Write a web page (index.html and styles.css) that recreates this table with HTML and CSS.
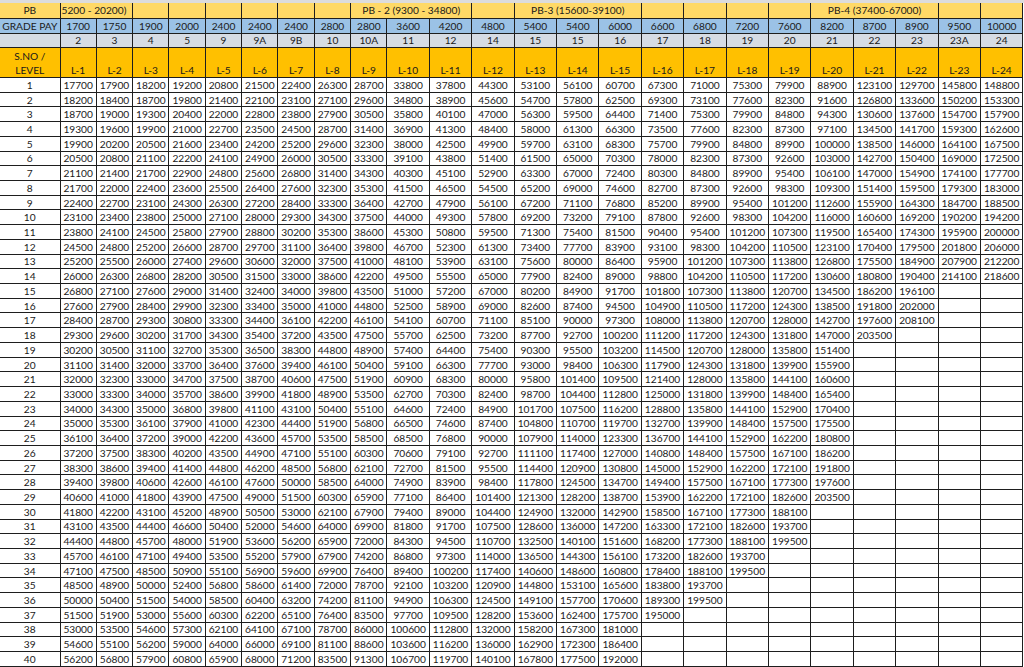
FILE: index.html
```html
<!DOCTYPE html>
<html lang="en">
<head>
<meta charset="utf-8">
<title>Pay Matrix</title>
<link rel="stylesheet" href="styles.css">
</head>
<body>
<div class="sheet">
<table class="pm">
<colgroup>
<col class="c0">
<col class="ca"><col class="ca"><col class="ca"><col class="ca"><col class="ca"><col class="ca"><col class="ca"><col class="ca"><col class="ca">
<col class="cb"><col class="cb"><col class="cb"><col class="cb"><col class="cb"><col class="cb"><col class="cb"><col class="cb"><col class="cb"><col class="cb"><col class="cb"><col class="cb"><col class="cb"><col class="cb"><col class="cb">
</colgroup>
<thead>
<tr class="pb"><td>PB</td><td colspan="2" class="left">5200 - 20200)</td><td></td><td></td><td></td><td></td><td></td><td></td><td colspan="3">PB - 2 (9300 - 34800)</td><td></td><td colspan="3">PB-3 (15600-39100)</td><td></td><td></td><td></td><td></td><td colspan="3">PB-4 (37400-67000)</td><td></td><td></td></tr>
<tr class="gp"><td>GRADE PAY</td><td>1700</td><td>1750</td><td>1900</td><td>2000</td><td>2400</td><td>2400</td><td>2400</td><td>2800</td><td>2800</td><td>3600</td><td>4200</td><td>4800</td><td>5400</td><td>5400</td><td>6000</td><td>6600</td><td>6800</td><td>7200</td><td>7600</td><td>8200</td><td>8700</td><td>8900</td><td>9500</td><td>10000</td></tr>
<tr class="gr"><td></td><td>2</td><td>3</td><td>4</td><td>5</td><td>9</td><td>9A</td><td>9B</td><td>10</td><td>10A</td><td>11</td><td>12</td><td>14</td><td>15</td><td>15</td><td>16</td><td>17</td><td>18</td><td>19</td><td>20</td><td>21</td><td>22</td><td>23</td><td>23A</td><td>24</td></tr>
<tr class="lv"><td>S.NO /<br>LEVEL</td><td>L-1</td><td>L-2</td><td>L-3</td><td>L-4</td><td>L-5</td><td>L-6</td><td>L-7</td><td>L-8</td><td>L-9</td><td>L-10</td><td>L-11</td><td>L-12</td><td>L-13</td><td>L-14</td><td>L-15</td><td>L-16</td><td>L-17</td><td>L-18</td><td>L-19</td><td>L-20</td><td>L-21</td><td>L-22</td><td>L-23</td><td>L-24</td></tr>
</thead>
<tbody>
<tr><td>1</td><td>17700</td><td>17900</td><td>18200</td><td>19200</td><td>20800</td><td>21500</td><td>22400</td><td>26300</td><td>28700</td><td>33800</td><td>37800</td><td>44300</td><td>53100</td><td>56100</td><td>60700</td><td>67300</td><td>71000</td><td>75300</td><td>79900</td><td>88900</td><td>123100</td><td>129700</td><td>145800</td><td>148800</td></tr>
<tr><td>2</td><td>18200</td><td>18400</td><td>18700</td><td>19800</td><td>21400</td><td>22100</td><td>23100</td><td>27100</td><td>29600</td><td>34800</td><td>38900</td><td>45600</td><td>54700</td><td>57800</td><td>62500</td><td>69300</td><td>73100</td><td>77600</td><td>82300</td><td>91600</td><td>126800</td><td>133600</td><td>150200</td><td>153300</td></tr>
<tr><td>3</td><td>18700</td><td>19000</td><td>19300</td><td>20400</td><td>22000</td><td>22800</td><td>23800</td><td>27900</td><td>30500</td><td>35800</td><td>40100</td><td>47000</td><td>56300</td><td>59500</td><td>64400</td><td>71400</td><td>75300</td><td>79900</td><td>84800</td><td>94300</td><td>130600</td><td>137600</td><td>154700</td><td>157900</td></tr>
<tr><td>4</td><td>19300</td><td>19600</td><td>19900</td><td>21000</td><td>22700</td><td>23500</td><td>24500</td><td>28700</td><td>31400</td><td>36900</td><td>41300</td><td>48400</td><td>58000</td><td>61300</td><td>66300</td><td>73500</td><td>77600</td><td>82300</td><td>87300</td><td>97100</td><td>134500</td><td>141700</td><td>159300</td><td>162600</td></tr>
<tr><td>5</td><td>19900</td><td>20200</td><td>20500</td><td>21600</td><td>23400</td><td>24200</td><td>25200</td><td>29600</td><td>32300</td><td>38000</td><td>42500</td><td>49900</td><td>59700</td><td>63100</td><td>68300</td><td>75700</td><td>79900</td><td>84800</td><td>89900</td><td>100000</td><td>138500</td><td>146000</td><td>164100</td><td>167500</td></tr>
<tr><td>6</td><td>20500</td><td>20800</td><td>21100</td><td>22200</td><td>24100</td><td>24900</td><td>26000</td><td>30500</td><td>33300</td><td>39100</td><td>43800</td><td>51400</td><td>61500</td><td>65000</td><td>70300</td><td>78000</td><td>82300</td><td>87300</td><td>92600</td><td>103000</td><td>142700</td><td>150400</td><td>169000</td><td>172500</td></tr>
<tr><td>7</td><td>21100</td><td>21400</td><td>21700</td><td>22900</td><td>24800</td><td>25600</td><td>26800</td><td>31400</td><td>34300</td><td>40300</td><td>45100</td><td>52900</td><td>63300</td><td>67000</td><td>72400</td><td>80300</td><td>84800</td><td>89900</td><td>95400</td><td>106100</td><td>147000</td><td>154900</td><td>174100</td><td>177700</td></tr>
<tr><td>8</td><td>21700</td><td>22000</td><td>22400</td><td>23600</td><td>25500</td><td>26400</td><td>27600</td><td>32300</td><td>35300</td><td>41500</td><td>46500</td><td>54500</td><td>65200</td><td>69000</td><td>74600</td><td>82700</td><td>87300</td><td>92600</td><td>98300</td><td>109300</td><td>151400</td><td>159500</td><td>179300</td><td>183000</td></tr>
<tr><td>9</td><td>22400</td><td>22700</td><td>23100</td><td>24300</td><td>26300</td><td>27200</td><td>28400</td><td>33300</td><td>36400</td><td>42700</td><td>47900</td><td>56100</td><td>67200</td><td>71100</td><td>76800</td><td>85200</td><td>89900</td><td>95400</td><td>101200</td><td>112600</td><td>155900</td><td>164300</td><td>184700</td><td>188500</td></tr>
<tr><td>10</td><td>23100</td><td>23400</td><td>23800</td><td>25000</td><td>27100</td><td>28000</td><td>29300</td><td>34300</td><td>37500</td><td>44000</td><td>49300</td><td>57800</td><td>69200</td><td>73200</td><td>79100</td><td>87800</td><td>92600</td><td>98300</td><td>104200</td><td>116000</td><td>160600</td><td>169200</td><td>190200</td><td>194200</td></tr>
<tr><td>11</td><td>23800</td><td>24100</td><td>24500</td><td>25800</td><td>27900</td><td>28800</td><td>30200</td><td>35300</td><td>38600</td><td>45300</td><td>50800</td><td>59500</td><td>71300</td><td>75400</td><td>81500</td><td>90400</td><td>95400</td><td>101200</td><td>107300</td><td>119500</td><td>165400</td><td>174300</td><td>195900</td><td>200000</td></tr>
<tr><td>12</td><td>24500</td><td>24800</td><td>25200</td><td>26600</td><td>28700</td><td>29700</td><td>31100</td><td>36400</td><td>39800</td><td>46700</td><td>52300</td><td>61300</td><td>73400</td><td>77700</td><td>83900</td><td>93100</td><td>98300</td><td>104200</td><td>110500</td><td>123100</td><td>170400</td><td>179500</td><td>201800</td><td>206000</td></tr>
<tr><td>13</td><td>25200</td><td>25500</td><td>26000</td><td>27400</td><td>29600</td><td>30600</td><td>32000</td><td>37500</td><td>41000</td><td>48100</td><td>53900</td><td>63100</td><td>75600</td><td>80000</td><td>86400</td><td>95900</td><td>101200</td><td>107300</td><td>113800</td><td>126800</td><td>175500</td><td>184900</td><td>207900</td><td>212200</td></tr>
<tr><td>14</td><td>26000</td><td>26300</td><td>26800</td><td>28200</td><td>30500</td><td>31500</td><td>33000</td><td>38600</td><td>42200</td><td>49500</td><td>55500</td><td>65000</td><td>77900</td><td>82400</td><td>89000</td><td>98800</td><td>104200</td><td>110500</td><td>117200</td><td>130600</td><td>180800</td><td>190400</td><td>214100</td><td>218600</td></tr>
<tr><td>15</td><td>26800</td><td>27100</td><td>27600</td><td>29000</td><td>31400</td><td>32400</td><td>34000</td><td>39800</td><td>43500</td><td>51000</td><td>57200</td><td>67000</td><td>80200</td><td>84900</td><td>91700</td><td>101800</td><td>107300</td><td>113800</td><td>120700</td><td>134500</td><td>186200</td><td>196100</td><td></td><td></td></tr>
<tr><td>16</td><td>27600</td><td>27900</td><td>28400</td><td>29900</td><td>32300</td><td>33400</td><td>35000</td><td>41000</td><td>44800</td><td>52500</td><td>58900</td><td>69000</td><td>82600</td><td>87400</td><td>94500</td><td>104900</td><td>110500</td><td>117200</td><td>124300</td><td>138500</td><td>191800</td><td>202000</td><td></td><td></td></tr>
<tr><td>17</td><td>28400</td><td>28700</td><td>29300</td><td>30800</td><td>33300</td><td>34400</td><td>36100</td><td>42200</td><td>46100</td><td>54100</td><td>60700</td><td>71100</td><td>85100</td><td>90000</td><td>97300</td><td>108000</td><td>113800</td><td>120700</td><td>128000</td><td>142700</td><td>197600</td><td>208100</td><td></td><td></td></tr>
<tr><td>18</td><td>29300</td><td>29600</td><td>30200</td><td>31700</td><td>34300</td><td>35400</td><td>37200</td><td>43500</td><td>47500</td><td>55700</td><td>62500</td><td>73200</td><td>87700</td><td>92700</td><td>100200</td><td>111200</td><td>117200</td><td>124300</td><td>131800</td><td>147000</td><td>203500</td><td></td><td></td><td></td></tr>
<tr><td>19</td><td>30200</td><td>30500</td><td>31100</td><td>32700</td><td>35300</td><td>36500</td><td>38300</td><td>44800</td><td>48900</td><td>57400</td><td>64400</td><td>75400</td><td>90300</td><td>95500</td><td>103200</td><td>114500</td><td>120700</td><td>128000</td><td>135800</td><td>151400</td><td></td><td></td><td></td><td></td></tr>
<tr><td>20</td><td>31100</td><td>31400</td><td>32000</td><td>33700</td><td>36400</td><td>37600</td><td>39400</td><td>46100</td><td>50400</td><td>59100</td><td>66300</td><td>77700</td><td>93000</td><td>98400</td><td>106300</td><td>117900</td><td>124300</td><td>131800</td><td>139900</td><td>155900</td><td></td><td></td><td></td><td></td></tr>
<tr><td>21</td><td>32000</td><td>32300</td><td>33000</td><td>34700</td><td>37500</td><td>38700</td><td>40600</td><td>47500</td><td>51900</td><td>60900</td><td>68300</td><td>80000</td><td>95800</td><td>101400</td><td>109500</td><td>121400</td><td>128000</td><td>135800</td><td>144100</td><td>160600</td><td></td><td></td><td></td><td></td></tr>
<tr><td>22</td><td>33000</td><td>33300</td><td>34000</td><td>35700</td><td>38600</td><td>39900</td><td>41800</td><td>48900</td><td>53500</td><td>62700</td><td>70300</td><td>82400</td><td>98700</td><td>104400</td><td>112800</td><td>125000</td><td>131800</td><td>139900</td><td>148400</td><td>165400</td><td></td><td></td><td></td><td></td></tr>
<tr><td>23</td><td>34000</td><td>34300</td><td>35000</td><td>36800</td><td>39800</td><td>41100</td><td>43100</td><td>50400</td><td>55100</td><td>64600</td><td>72400</td><td>84900</td><td>101700</td><td>107500</td><td>116200</td><td>128800</td><td>135800</td><td>144100</td><td>152900</td><td>170400</td><td></td><td></td><td></td><td></td></tr>
<tr><td>24</td><td>35000</td><td>35300</td><td>36100</td><td>37900</td><td>41000</td><td>42300</td><td>44400</td><td>51900</td><td>56800</td><td>66500</td><td>74600</td><td>87400</td><td>104800</td><td>110700</td><td>119700</td><td>132700</td><td>139900</td><td>148400</td><td>157500</td><td>175500</td><td></td><td></td><td></td><td></td></tr>
<tr><td>25</td><td>36100</td><td>36400</td><td>37200</td><td>39000</td><td>42200</td><td>43600</td><td>45700</td><td>53500</td><td>58500</td><td>68500</td><td>76800</td><td>90000</td><td>107900</td><td>114000</td><td>123300</td><td>136700</td><td>144100</td><td>152900</td><td>162200</td><td>180800</td><td></td><td></td><td></td><td></td></tr>
<tr><td>26</td><td>37200</td><td>37500</td><td>38300</td><td>40200</td><td>43500</td><td>44900</td><td>47100</td><td>55100</td><td>60300</td><td>70600</td><td>79100</td><td>92700</td><td>111100</td><td>117400</td><td>127000</td><td>140800</td><td>148400</td><td>157500</td><td>167100</td><td>186200</td><td></td><td></td><td></td><td></td></tr>
<tr><td>27</td><td>38300</td><td>38600</td><td>39400</td><td>41400</td><td>44800</td><td>46200</td><td>48500</td><td>56800</td><td>62100</td><td>72700</td><td>81500</td><td>95500</td><td>114400</td><td>120900</td><td>130800</td><td>145000</td><td>152900</td><td>162200</td><td>172100</td><td>191800</td><td></td><td></td><td></td><td></td></tr>
<tr><td>28</td><td>39400</td><td>39800</td><td>40600</td><td>42600</td><td>46100</td><td>47600</td><td>50000</td><td>58500</td><td>64000</td><td>74900</td><td>83900</td><td>98400</td><td>117800</td><td>124500</td><td>134700</td><td>149400</td><td>157500</td><td>167100</td><td>177300</td><td>197600</td><td></td><td></td><td></td><td></td></tr>
<tr><td>29</td><td>40600</td><td>41000</td><td>41800</td><td>43900</td><td>47500</td><td>49000</td><td>51500</td><td>60300</td><td>65900</td><td>77100</td><td>86400</td><td>101400</td><td>121300</td><td>128200</td><td>138700</td><td>153900</td><td>162200</td><td>172100</td><td>182600</td><td>203500</td><td></td><td></td><td></td><td></td></tr>
<tr><td>30</td><td>41800</td><td>42200</td><td>43100</td><td>45200</td><td>48900</td><td>50500</td><td>53000</td><td>62100</td><td>67900</td><td>79400</td><td>89000</td><td>104400</td><td>124900</td><td>132000</td><td>142900</td><td>158500</td><td>167100</td><td>177300</td><td>188100</td><td></td><td></td><td></td><td></td><td></td></tr>
<tr><td>31</td><td>43100</td><td>43500</td><td>44400</td><td>46600</td><td>50400</td><td>52000</td><td>54600</td><td>64000</td><td>69900</td><td>81800</td><td>91700</td><td>107500</td><td>128600</td><td>136000</td><td>147200</td><td>163300</td><td>172100</td><td>182600</td><td>193700</td><td></td><td></td><td></td><td></td><td></td></tr>
<tr><td>32</td><td>44400</td><td>44800</td><td>45700</td><td>48000</td><td>51900</td><td>53600</td><td>56200</td><td>65900</td><td>72000</td><td>84300</td><td>94500</td><td>110700</td><td>132500</td><td>140100</td><td>151600</td><td>168200</td><td>177300</td><td>188100</td><td>199500</td><td></td><td></td><td></td><td></td><td></td></tr>
<tr><td>33</td><td>45700</td><td>46100</td><td>47100</td><td>49400</td><td>53500</td><td>55200</td><td>57900</td><td>67900</td><td>74200</td><td>86800</td><td>97300</td><td>114000</td><td>136500</td><td>144300</td><td>156100</td><td>173200</td><td>182600</td><td>193700</td><td></td><td></td><td></td><td></td><td></td><td></td></tr>
<tr><td>34</td><td>47100</td><td>47500</td><td>48500</td><td>50900</td><td>55100</td><td>56900</td><td>59600</td><td>69900</td><td>76400</td><td>89400</td><td>100200</td><td>117400</td><td>140600</td><td>148600</td><td>160800</td><td>178400</td><td>188100</td><td>199500</td><td></td><td></td><td></td><td></td><td></td><td></td></tr>
<tr><td>35</td><td>48500</td><td>48900</td><td>50000</td><td>52400</td><td>56800</td><td>58600</td><td>61400</td><td>72000</td><td>78700</td><td>92100</td><td>103200</td><td>120900</td><td>144800</td><td>153100</td><td>165600</td><td>183800</td><td>193700</td><td></td><td></td><td></td><td></td><td></td><td></td><td></td></tr>
<tr><td>36</td><td>50000</td><td>50400</td><td>51500</td><td>54000</td><td>58500</td><td>60400</td><td>63200</td><td>74200</td><td>81100</td><td>94900</td><td>106300</td><td>124500</td><td>149100</td><td>157700</td><td>170600</td><td>189300</td><td>199500</td><td></td><td></td><td></td><td></td><td></td><td></td><td></td></tr>
<tr><td>37</td><td>51500</td><td>51900</td><td>53000</td><td>55600</td><td>60300</td><td>62200</td><td>65100</td><td>76400</td><td>83500</td><td>97700</td><td>109500</td><td>128200</td><td>153600</td><td>162400</td><td>175700</td><td>195000</td><td></td><td></td><td></td><td></td><td></td><td></td><td></td><td></td></tr>
<tr><td>38</td><td>53000</td><td>53500</td><td>54600</td><td>57300</td><td>62100</td><td>64100</td><td>67100</td><td>78700</td><td>86000</td><td>100600</td><td>112800</td><td>132000</td><td>158200</td><td>167300</td><td>181000</td><td></td><td></td><td></td><td></td><td></td><td></td><td></td><td></td><td></td></tr>
<tr><td>39</td><td>54600</td><td>55100</td><td>56200</td><td>59000</td><td>64000</td><td>66000</td><td>69100</td><td>81100</td><td>88600</td><td>103600</td><td>116200</td><td>136000</td><td>162900</td><td>172300</td><td>186400</td><td></td><td></td><td></td><td></td><td></td><td></td><td></td><td></td><td></td></tr>
<tr><td>40</td><td>56200</td><td>56800</td><td>57900</td><td>60800</td><td>65900</td><td>68000</td><td>71200</td><td>83500</td><td>91300</td><td>106700</td><td>119700</td><td>140100</td><td>167800</td><td>177500</td><td>192000</td><td></td><td></td><td></td><td></td><td></td><td></td><td></td><td></td><td></td></tr>
</tbody>
</table>
</div>
</body>
</html>
```
FILE: styles.css
```css
html, body {
  margin: 0;
  padding: 0;
  background: #ffffff;
}

.sheet {
  border-top: 3px solid #dcdcdc;
  width: 1024px;
  overflow: hidden;
}

.pm {
  table-layout: fixed;
  width: 1023px;
  border-collapse: collapse;
  font-family: Lato, "Liberation Sans", Arial, sans-serif;
  font-size: 10.2px;
  color: #1a1a1a;
}

.pm .c0 { width: 60px; }
.pm .ca { width: 36.33px; }
.pm .cb { width: 42.4px; }

.pm td {
  border: 1px solid #1e1e1e;
  padding: 0;
  text-align: center;
  vertical-align: middle;
  line-height: 12px;
  white-space: nowrap;
  overflow: hidden;
  background: #ffffff;
}

.pm tr:first-child td { border-top: 0; }
.pm td:first-child { border-left: 0; }

.pm tbody tr { height: 14.72px; }

.pm .pb { height: 15.3px; }
.pm .pb td { background: #ffd966; }
.pm .pb td.left { text-align: left; padding-left: 1px; }

.pm .gp { height: 15px; }
.pm .gp td { background: #9bc2e6; }

.pm .gr { height: 14.4px; }
.pm .gr td { background: #d6dce4; }

.pm .lv { height: 29.8px; }
.pm .lv td {
  background: #ffc000;
  vertical-align: bottom;
  line-height: 14px;
  padding-bottom: 0;
}
```
